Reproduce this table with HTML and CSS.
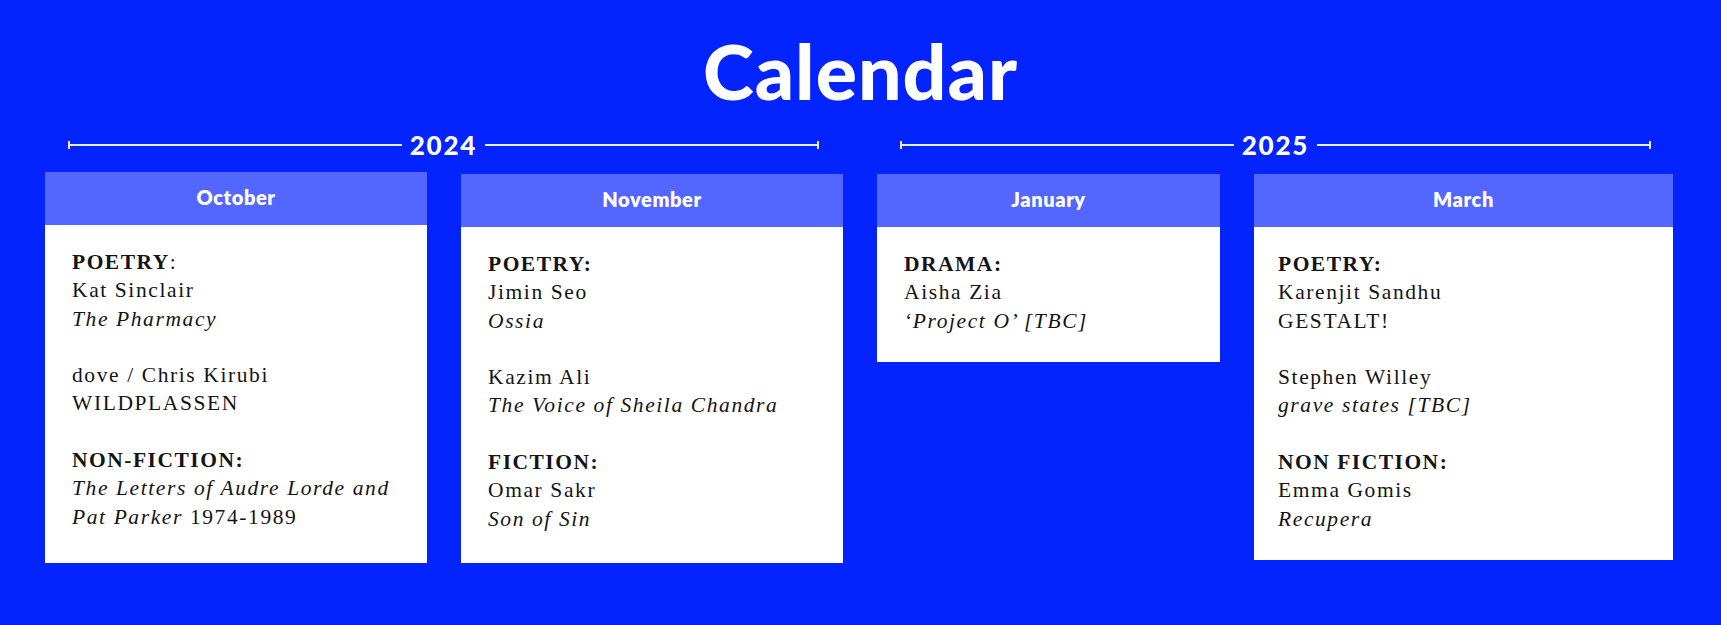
FILE: index.html
```html
<!DOCTYPE html>
<html lang="en">
<head>
<meta charset="utf-8">
<title>Calendar</title>
<link rel="stylesheet" href="styles.css">
</head>
<body>
<main class="page">
  <h1 class="title">Calendar</h1>

  <div class="years">
    <div class="year">
      <span class="rule rule-left"></span>
      <span class="year-label">2024</span>
      <span class="rule rule-right"></span>
    </div>
    <div class="year">
      <span class="rule rule-left"></span>
      <span class="year-label">2025</span>
      <span class="rule rule-right"></span>
    </div>
  </div>

  <div class="cards">
    <section class="card card-oct">
      <h2 class="month">October</h2>
      <div class="card-body">
        <p><b>POETRY</b>:<br>Kat Sinclair<br><i>The Pharmacy</i></p>
        <p>dove / Chris Kirubi<br>WILDPLASSEN</p>
        <p><b>NON-FICTION:</b><br><i>The Letters of Audre Lorde and<br>Pat Parker</i> 1974-1989</p>
      </div>
    </section>

    <section class="card card-nov">
      <h2 class="month">November</h2>
      <div class="card-body">
        <p><b>POETRY:</b><br>Jimin Seo<br><i>Ossia</i></p>
        <p>Kazim Ali<br><i>The Voice of Sheila Chandra</i></p>
        <p><b>FICTION:</b><br>Omar Sakr<br><i>Son of Sin</i></p>
      </div>
    </section>

    <section class="card card-jan">
      <h2 class="month">January</h2>
      <div class="card-body">
        <p><b>DRAMA:</b><br>Aisha Zia<br><i>‘Project O’ [TBC]</i></p>
      </div>
    </section>

    <section class="card card-mar">
      <h2 class="month">March</h2>
      <div class="card-body">
        <p><b>POETRY:</b><br>Karenjit Sandhu<br>GESTALT!</p>
        <p>Stephen Willey<br><i>grave states [TBC]</i></p>
        <p><b>NON FICTION:</b><br>Emma Gomis<br><i>Recupera</i></p>
      </div>
    </section>
  </div>
</main>
</body>
</html>
```

FILE: styles.css
```css
html, body {
  margin: 0;
  padding: 0;
}

body {
  background: #0424ff;
  width: 1721px;
  height: 625px;
  overflow: hidden;
}

.page {
  display: flex;
  flex-direction: column;
}

.title {
  margin: 32px 0 0;
  font-family: "Lato", "Noto Sans", sans-serif;
  font-weight: 900;
  font-size: 77px;
  line-height: 76px;
  letter-spacing: 1px;
  color: #ffffff;
  text-align: center;
}

.years {
  display: grid;
  grid-template-columns: 751px 751px;
  column-gap: 81px;
  padding-left: 68px;
  margin-top: 22px;
  height: 30px;
}

.year {
  display: flex;
  align-items: center;
  gap: 8px;
}

.year-label {
  font-family: "Lato", "Noto Sans", sans-serif;
  font-weight: 900;
  font-size: 26px;
  line-height: 30px;
  letter-spacing: 1.8px;
  color: #ffffff;
}

.rule {
  flex: 1;
  height: 2px;
  background: #e8ecff;
  position: relative;
}

.rule-left::before,
.rule-right::after {
  content: "";
  position: absolute;
  top: -3px;
  width: 2px;
  height: 8px;
  background: #e8ecff;
}

.rule-left::before { left: 0; }
.rule-right::after { right: 0; }

.cards {
  display: flex;
  align-items: flex-start;
  gap: 34px;
  padding-left: 45px;
  margin-top: 14px;
}

.card {
  background: #ffffff;
}

.card-oct { width: 382px; margin-top: -2px; }
.card-nov { width: 382px; }
.card-jan { width: 343px; }
.card-mar { width: 419px; }

.month {
  margin: 0;
  height: 53px;
  box-sizing: border-box;
  padding-bottom: 4px;
  display: flex;
  align-items: center;
  justify-content: center;
  background: #5367ff;
  font-family: "Lato", "Noto Sans", sans-serif;
  font-weight: 800;
  font-size: 20px;
  letter-spacing: 0.6px;
  color: #ffffff;
}

.card-body {
  padding: 23px 20px 30px 27px;
  font-family: "Liberation Serif", "Times New Roman", serif;
  font-size: 21.5px;
  line-height: 28.3px;
  letter-spacing: 1.6px;
  color: #141414;
}

.card-oct .card-body { padding-bottom: 32px; }
.card-jan .card-body { padding-bottom: 27px; }
.card-mar .card-body { padding-left: 24px; padding-bottom: 27px; }

.card-body p {
  margin: 0 0 28.3px;
}

.card-body p:last-child {
  margin-bottom: 0;
}

.card-body b {
  font-weight: 700;
  letter-spacing: 1.5px;
}
```
